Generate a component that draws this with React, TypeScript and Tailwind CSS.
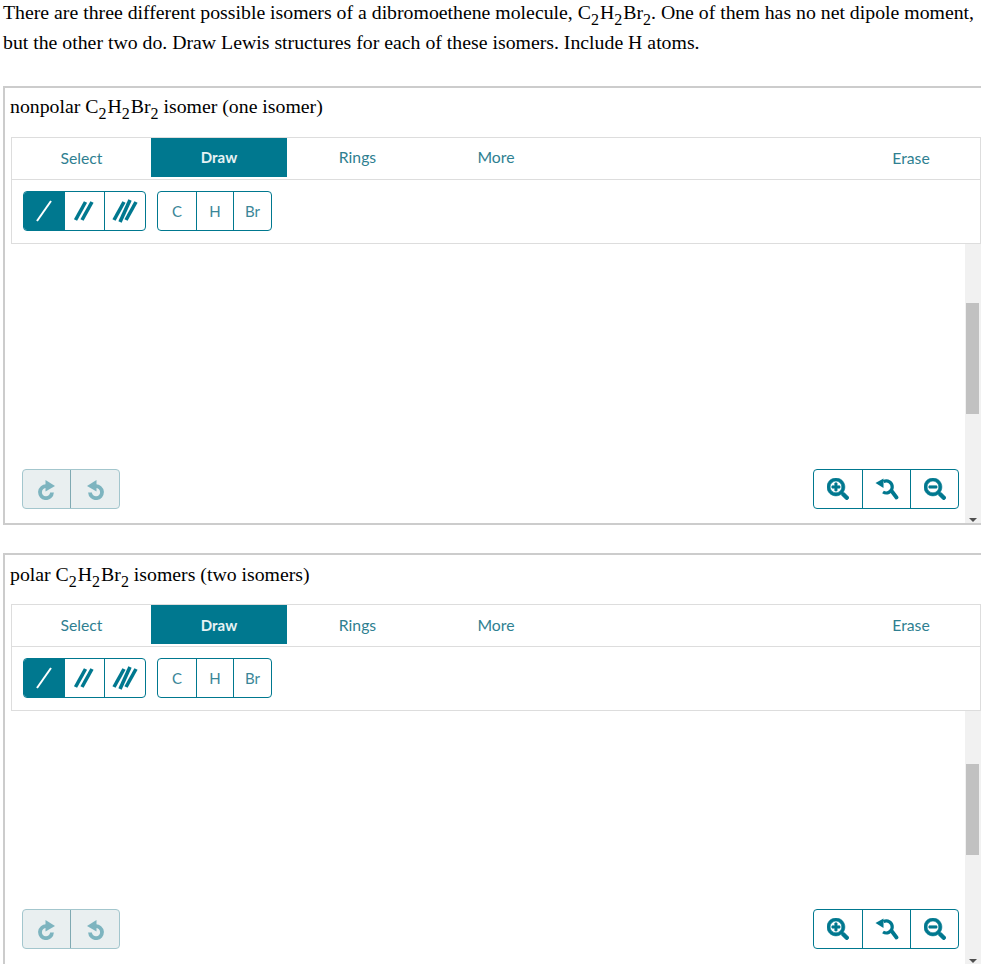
import { FaSearchMinus, FaSearchPlus } from "react-icons/fa";

const teal = "#00788f";
const faded = "#7db4bf";

function Formula() {
  return (
    <span>
      C<sub className="text-[16px] bottom-[-6px] mr-[1px]">2</sub>H<sub className="text-[16px] bottom-[-6px] mr-[1px]">2</sub>Br<sub className="text-[16px] bottom-[-6px]">2</sub>
    </span>
  );
}

function RedoIcon() {
  return (
    <svg width="20" height="22" viewBox="0 0 20 22" fill="none" stroke={faded}>
      <path d="M15 14.5 A6 6 0 1 1 9.5 8.2" strokeWidth="3.8" />
      <path d="M8.5 2 L18 8 L8.5 13.5 Z" fill={faded} stroke="none" />
    </svg>
  );
}

function UndoIcon() {
  return (
    <svg width="20" height="22" viewBox="0 0 20 22" fill="none" stroke={faded}>
      <path d="M5 14.5 A6 6 0 1 0 10.5 8.2" strokeWidth="3.8" />
      <path d="M11.5 2 L2 8 L11.5 13.5 Z" fill={faded} stroke="none" />
    </svg>
  );
}

function ZoomReset() {
  return (
    <svg width="24" height="22" viewBox="0 0 24 22" fill="none" stroke={teal}>
      <path d="M8.5 3.6 A6 6 0 1 1 8 14" strokeWidth="3.2" />
      <path d="M17 13.5 L21.5 19.5" strokeWidth="3.8" strokeLinecap="round" />
      <path d="M0.5 5 L8.5 0.5 L8.5 10 Z" fill={teal} stroke="none" />
    </svg>
  );
}

function BondLines({ count }: { count: number }) {
  const xs = count === 1 ? [0] : count === 2 ? [-4.5, 2] : [-6, 0, 6];
  return (
    <svg width="28" height="26" viewBox="-14 -13 28 26" stroke={count === 1 ? "#ffffff" : teal} strokeWidth={count === 1 ? 2 : 3.6}>
      {xs.map((x) =>
        count === 1 ? (
          <line key={x} x1={-7} y1="10" x2={7} y2="-10" />
        ) : (
          <line key={x} x1={x - 5} y1={x === 0 ? 11 : 9} x2={x + 5} y2={x === 0 ? -11 : -9} />
        ),
      )}
    </svg>
  );
}

function Toolbar({ first }: { first: boolean }) {
  const tab = "h-[39px] flex items-center justify-center text-[15.75px] text-[#2f7f91]";
  const rings = first ? "pb-[2px]" : "";
  return (
    <div className="ml-[6px] w-[970px] h-[107px] border border-[#dddddd] font-['Lato',sans-serif]">
      <div className="flex h-[42px] border-b border-[#dddddd]">
        <div className={`${tab} w-[139px]`}>Select</div>
        <div className={`h-[39px] w-[136px] flex items-center justify-center text-[15px] font-bold text-[#e6f2f4] bg-[#00788f] ${first ? "" : "pt-[2px]"}`}>Draw</div>
        <div className={`${tab} w-[141px] ${rings}`}>Rings</div>
        <div className={`${tab} w-[136px] ${rings}`}>More</div>
        <div className="flex-1" />
        <div className={`${tab} w-[138px]`}>Erase</div>
      </div>
      <div className="flex gap-[11px] pt-[11px] pl-[11px]">
        <div className="flex h-[40px] rounded-[4px] border border-[#00788f] overflow-hidden">
          <div className="w-[40px] bg-[#00788f] flex items-center justify-center">
            <BondLines count={1} />
          </div>
          <div className="w-[40px] border-l border-[#00788f] flex items-center justify-center">
            <BondLines count={2} />
          </div>
          <div className="w-[41px] border-l border-[#00788f] flex items-center justify-center">
            <BondLines count={3} />
          </div>
        </div>
        <div className="flex h-[40px] rounded-[4px] border border-[#00788f] text-[15px] text-[#3a8698]">
          <div className="w-[38px] flex items-center justify-center">C</div>
          <div className="w-[37px] border-l border-[#00788f] flex items-center justify-center">H</div>
          <div className="w-[38px] border-l border-[#00788f] flex items-center justify-center">Br</div>
        </div>
      </div>
    </div>
  );
}

function Canvas({ height, bottom, thumbTop, thumbHeight }: { height: string; bottom: string; thumbTop: string; thumbHeight: string }) {
  return (
    <div className={`flex ${height}`}>
      <div className={`flex-1 flex items-end justify-between pl-[17px] pr-[6px] ${bottom}`}>
        <div className="flex h-[40px] w-[98px] rounded-[4px] border border-[#a3c6cd] bg-[#e9eff0]">
          <div className="w-[47px] flex items-center justify-center">
            <RedoIcon />
          </div>
          <div className="flex-1 border-l border-[#7fa9b2] flex items-center justify-center">
            <UndoIcon />
          </div>
        </div>
        <div className="flex h-[40px] w-[146px] rounded-[4px] border border-[#00788f] text-[#00788f]">
          <div className="w-[48px] flex items-center justify-center">
            <FaSearchPlus size={22} stroke="currentColor" strokeWidth={14} />
          </div>
          <div className="w-[48px] border-l border-[#00788f] flex items-center justify-center">
            <ZoomReset />
          </div>
          <div className="flex-1 border-l border-[#00788f] flex items-center justify-center">
            <FaSearchMinus size={22} stroke="currentColor" strokeWidth={14} />
          </div>
        </div>
      </div>
      <div className="w-[16px] bg-[#f1f1f1] flex flex-col items-start">
        <div className={`ml-[1px] w-[13px] bg-[#c1c1c1] ${thumbTop} ${thumbHeight}`} />
        <div className="mt-auto mb-[1px] ml-[4px] w-0 h-0 border-x-[4px] border-x-transparent border-t-[4px] border-t-[#505050]" />
      </div>
    </div>
  );
}

export default function App() {
  return (
    <div className="w-[981px] h-[964px] overflow-hidden bg-white text-black font-['Liberation_Serif',serif] text-[19.8px]">
      <div className="h-[86px] pl-[3px] flex flex-col">
        <p className="leading-[30px] -mt-[3px] whitespace-nowrap">
          There are three different possible isomers of a dibromoethene molecule, <Formula />. One of them has no net dipole moment,
          <br />
          but the other two do. Draw Lewis structures for each of these isomers. Include H atoms.
        </p>
      </div>

      <div className="ml-[3px] w-[978px] border-2 border-r-0 border-[#cccccc]">
        <div className="h-[49px] pl-[5px] pt-[4px] leading-[28px] whitespace-nowrap">
          nonpolar <Formula /> isomer (one isomer)
        </div>
        <Toolbar first />
        <Canvas height="h-[279px]" bottom="pb-[14px]" thumbTop="mt-[59px]" thumbHeight="h-[111px]" />
      </div>

      <div className="mt-[28px] ml-[3px] w-[978px] border-2 border-r-0 border-b-0 border-[#cccccc]">
        <div className="h-[49px] pl-[5px] pt-[5px] leading-[28px] whitespace-nowrap">
          polar <Formula /> isomers (two isomers)
        </div>
        <Toolbar first={false} />
        <Canvas height="h-[253px]" bottom="pb-[15px]" thumbTop="mt-[53px]" thumbHeight="h-[91px]" />
      </div>
    </div>
  );
}
